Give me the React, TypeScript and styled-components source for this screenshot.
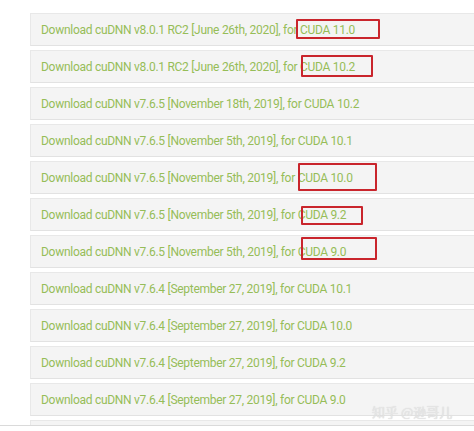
import React from 'react'
import styled, { createGlobalStyle } from 'styled-components'

type Box = { x: number; y: number; w: number; h: number }

type Item = {
  version: string
  date: string
  cuda: string
  box?: Box
}

const items: Item[] = [
  { version: 'v8.0.1 RC2', date: 'June 26th, 2020', cuda: '11.0', box: { x: 295, y: 19, w: 84, h: 20 } },
  { version: 'v8.0.1 RC2', date: 'June 26th, 2020', cuda: '10.2', box: { x: 300, y: 55, w: 72, h: 22 } },
  { version: 'v7.6.5', date: 'November 18th, 2019', cuda: '10.2' },
  { version: 'v7.6.5', date: 'November 5th, 2019', cuda: '10.1' },
  { version: 'v7.6.5', date: 'November 5th, 2019', cuda: '10.0', box: { x: 297, y: 163, w: 79, h: 28 } },
  { version: 'v7.6.5', date: 'November 5th, 2019', cuda: '9.2', box: { x: 300, y: 206, w: 62, h: 19 } },
  { version: 'v7.6.5', date: 'November 5th, 2019', cuda: '9.0', box: { x: 300, y: 237, w: 76, h: 23 } },
  { version: 'v7.6.4', date: 'September 27, 2019', cuda: '10.1' },
  { version: 'v7.6.4', date: 'September 27, 2019', cuda: '10.0' },
  { version: 'v7.6.4', date: 'September 27, 2019', cuda: '9.2' },
  { version: 'v7.6.4', date: 'September 27, 2019', cuda: '9.0' },
]

const ROW_TOP = 13
const PITCH = 37
const ROW_LEFT = 30

export default function App() {
  return (
    <>
      <GlobalStyle />
      <Page>
        <List>
          {items.map((item, i) => (
            <Row key={i}>
              <RowLink>
                Download cuDNN {item.version} [{item.date}], for CUDA {item.cuda}
              </RowLink>
              {item.box && (
                <Highlight
                  $left={item.box.x - ROW_LEFT}
                  $top={item.box.y - (ROW_TOP + i * PITCH)}
                  $width={item.box.w}
                  $height={item.box.h}
                />
              )}
            </Row>
          ))}
          {/* next row, cut off by the bottom of the screenshot */}
          <Row />
        </List>
        <Watermark>知乎 @逊哥儿</Watermark>
      </Page>
    </>
  )
}

const GlobalStyle = createGlobalStyle`
  html, body {
    margin: 0;
    padding: 0;
    background: #ffffff;
  }
  body {
    font-family: Roboto, "Liberation Sans", sans-serif;
  }
`

const Page = styled.div`
  position: relative;
  height: 425px;
  overflow: hidden;
  border-bottom: 1px solid #dadada;
`

const List = styled.div`
  display: flex;
  flex-direction: column;
  gap: 4px;
  padding: ${ROW_TOP}px 0 0 ${ROW_LEFT}px;
`

const Row = styled.div`
  position: relative;
  display: flex;
  align-items: center;
  flex-shrink: 0;
  height: 33px;
  box-sizing: border-box;
  margin-right: -10px;
  padding-left: 10px;
  background: #f4f4f4;
  border: 1px solid #e8e8e8;
  border-bottom-color: #e2e2e2;
`

const RowLink = styled.span`
  font-size: 12px;
  color: #96bd58;
  white-space: nowrap;
  letter-spacing: -0.28px;
`

const Highlight = styled.span<{ $left: number; $top: number; $width: number; $height: number }>`
  position: absolute;
  left: ${({ $left }) => $left}px;
  top: ${({ $top }) => $top - 1}px;
  width: ${({ $width }) => $width}px;
  height: ${({ $height }) => $height}px;
  box-sizing: border-box;
  border: 2px solid #c9252c;
  border-radius: 1px;
  pointer-events: none;
`

const Watermark = styled.div`
  position: absolute;
  left: 372px;
  top: 402px;
  font-family: "Noto Sans CJK SC", sans-serif;
  font-size: 13px;
  color: #e6e6e6;
  text-shadow: 0 0 1px #d0d0d0;
  white-space: nowrap;
`
